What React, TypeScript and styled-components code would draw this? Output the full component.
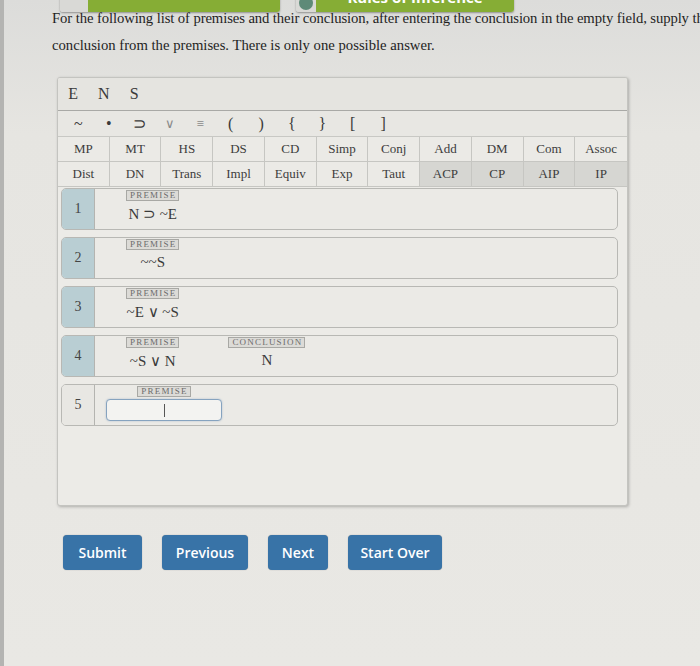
import React from 'react';
import styled, { createGlobalStyle } from 'styled-components';

const GlobalStyle = createGlobalStyle`
  html, body {
    margin: 0;
    padding: 0;
    overflow: hidden;
  }
  body {
    width: 700px;
    height: 666px;
    background: linear-gradient(180deg, #dcdcda 0%, #e6e5e1 20%, #e9e8e4 100%);
    border-left: 4px solid #b4b4b2;
    box-sizing: border-box;
    font-family: 'Liberation Serif', 'Times New Roman', serif;
  }
`;

const Page = styled.div`
  padding-left: 48px;
  width: 800px;
`;

const TabRow = styled.div`
  display: flex;
  gap: 16px;
  margin-left: 8px;
  margin-top: -22px;
`;

const Tab = styled.div<{ $w: number }>`
  display: flex;
  width: ${(p) => p.$w}px;
  height: 34px;
  border-radius: 3px;
  overflow: hidden;
  box-shadow: 0 1px 2px rgba(0, 0, 0, 0.35);
`;

const TabIcon = styled.div<{ $w: number }>`
  width: ${(p) => p.$w}px;
  background: #d9d9d6;
  display: flex;
  align-items: flex-end;
  justify-content: center;
  padding-bottom: 2px;
  box-sizing: border-box;
`;

const Dot = styled.div`
  width: 14px;
  height: 14px;
  border-radius: 50%;
  background: #5e8a78;
`;

const TabLabel = styled.div`
  flex: 1;
  background: #86ad35;
  color: #fff;
  font-family: 'Open Sans', 'Liberation Sans', sans-serif;
  font-weight: 700;
  font-size: 15px;
  display: flex;
  align-items: flex-end;
  justify-content: center;
  padding-bottom: 5px;
`;

const Intro = styled.p`
  margin: -7px 0 0 0;
  font-size: 14.7px;
  line-height: 27px;
  color: #1e1e1e;
  white-space: nowrap;
`;

const FirstLine = styled.span`
  letter-spacing: -0.1px;
`;

const Panel = styled.div`
  margin: 18px 0 0 5px;
  width: 571px;
  height: 429px;
  background: #ecebe7;
  border: 1px solid #c4c4c0;
  border-radius: 3px;
  box-shadow: 1px 1px 3px rgba(0, 0, 0, 0.25);
  box-sizing: border-box;
  overflow: hidden;
`;

const VarBar = styled.div`
  display: flex;
  height: 32px;
  align-items: center;
  background: #e5e4e0;
  border-bottom: 1px solid #a9a9a6;
`;

const SymBar = styled.div`
  display: flex;
  height: 25px;
  align-items: center;
  padding-left: 5px;
  background: #e8e7e3;
  border-bottom: 1px solid #c8c8c4;
`;

const Key = styled.span<{ $faint?: boolean }>`
  width: 30.5px;
  text-align: center;
  font-size: ${(p) => (p.$faint ? '13px' : '16px')};
  color: ${(p) => (p.$faint ? '#8a8a8a' : '#3a3a3a')};
`;

const RuleGrid = styled.div`
  display: grid;
  grid-template-columns: repeat(11, 1fr);
`;

const Rule = styled.div<{ $dark?: boolean }>`
  height: 24px;
  display: flex;
  align-items: center;
  justify-content: center;
  font-size: 13px;
  color: #3c3c3c;
  background: ${(p) => (p.$dark ? '#d6d6d2' : '#ebeae6')};
  border-right: 1px solid #c6c6c2;
  border-bottom: 1px solid #c6c6c2;
  &:nth-child(11n) {
    border-right: none;
  }
`;

const Lines = styled.div`
  display: flex;
  flex-direction: column;
  gap: 7px;
  padding: 1px 9px 0 3px;
`;

const Line = styled.div`
  display: flex;
  height: 42px;
  border: 1px solid #b8b8b4;
  border-radius: 5px;
  background: #ebeae6;
  overflow: hidden;
  box-sizing: border-box;
`;

const Num = styled.div<{ $given: boolean }>`
  width: 32px;
  display: flex;
  align-items: center;
  justify-content: center;
  font-size: 14px;
  color: #444;
  background: ${(p) => (p.$given ? '#b9ced3' : '#e8e7e3')};
  border-right: 1px solid #b4b4b0;
`;

const Cell = styled.div<{ $left: number; $width?: number }>`
  margin-left: ${(p) => p.$left}px;
  width: ${(p) => (p.$width ? `${p.$width}px` : 'auto')};
  display: flex;
  flex-direction: column;
  align-items: center;
  padding-top: 1px;
`;

const Tag = styled.span`
  font-size: 9px;
  line-height: 9px;
  letter-spacing: 1.2px;
  color: #6c6c6c;
  background: #dcdbd7;
  border: 1px solid #a8a8a4;
  padding: 0 2px 0 3px;
`;

const Formula = styled.span`
  font-size: 15px;
  color: #3a3a3a;
  margin-top: 4px;
`;

const Field = styled.div`
  width: 116px;
  height: 22px;
  margin-top: 2px;
  border: 1px solid #86a3bf;
  border-radius: 4px;
  background: #f3f3f1;
  box-shadow: 0 0 2px rgba(80, 120, 170, 0.4);
  display: flex;
  align-items: center;
  justify-content: center;
  box-sizing: border-box;
`;

const Caret = styled.div`
  width: 1px;
  height: 13px;
  background: #555;
`;

const Buttons = styled.div`
  display: flex;
  gap: 20px;
  margin: 29px 0 0 11px;
`;

const Button = styled.button<{ $w: number }>`
  width: ${(p) => p.$w}px;
  height: 35px;
  border: none;
  border-radius: 4px;
  background: #3873a7;
  color: #fff;
  font-family: 'Open Sans', 'Liberation Sans', sans-serif;
  font-weight: 600;
  font-size: 14px;
  box-shadow: 0 0 1px rgba(0, 0, 0, 0.4);
`;

const symbols = ['~', '•', '⊃', '∨', '≡', '(', ')', '{', '}', '[', ']'];
const rulesTop = ['MP', 'MT', 'HS', 'DS', 'CD', 'Simp', 'Conj', 'Add', 'DM', 'Com', 'Assoc'];
const rulesBottom = ['Dist', 'DN', 'Trans', 'Impl', 'Equiv', 'Exp', 'Taut', 'ACP', 'CP', 'AIP', 'IP'];
const darkRules = ['ACP', 'CP', 'AIP', 'IP'];

const premises = ['N ⊃ ~E', '~~S', '~E ∨ ~S', '~S ∨ N'];

function App() {
  return (
    <Page>
      <GlobalStyle />
      <TabRow>
        <Tab $w={220}>
          <TabIcon $w={28} />
          <TabLabel />
        </Tab>
        <Tab $w={218}>
          <TabIcon $w={20}>
            <Dot />
          </TabIcon>
          <TabLabel>Rules of Inference</TabLabel>
        </Tab>
      </TabRow>
      <Intro>
        <FirstLine>
          For the following list of premises and their conclusion, after entering the conclusion in the empty field, supply the justification for the
        </FirstLine>
        <br />
        conclusion from the premises. There is only one possible answer.
      </Intro>
      <Panel>
        <VarBar>
          {['E', 'N', 'S'].map((v) => (
            <Key key={v}>{v}</Key>
          ))}
        </VarBar>
        <SymBar>
          {symbols.map((s) => (
            <Key key={s} $faint={s === '∨' || s === '≡'}>
              {s}
            </Key>
          ))}
        </SymBar>
        <RuleGrid>
          {rulesTop.map((r) => (
            <Rule key={r}>{r}</Rule>
          ))}
          {rulesBottom.map((r) => (
            <Rule key={r} $dark={darkRules.includes(r)}>
              {r}
            </Rule>
          ))}
        </RuleGrid>
        <Lines>
          {premises.map((f, i) => (
            <Line key={f}>
              <Num $given>{i + 1}</Num>
              <Cell $left={31}>
                <Tag>PREMISE</Tag>
                <Formula>{f}</Formula>
              </Cell>
              {i === 3 && (
                <Cell $left={49}>
                  <Tag>CONCLUSION</Tag>
                  <Formula>N</Formula>
                </Cell>
              )}
            </Line>
          ))}
          <Line>
            <Num $given={false}>5</Num>
            <Cell $left={11} $width={116}>
              <Tag>PREMISE</Tag>
              <Field>
                <Caret />
              </Field>
            </Cell>
          </Line>
        </Lines>
      </Panel>
      <Buttons>
        <Button $w={79}>Submit</Button>
        <Button $w={86}>Previous</Button>
        <Button $w={60}>Next</Button>
        <Button $w={94}>Start Over</Button>
      </Buttons>
    </Page>
  );
}

export default App;
